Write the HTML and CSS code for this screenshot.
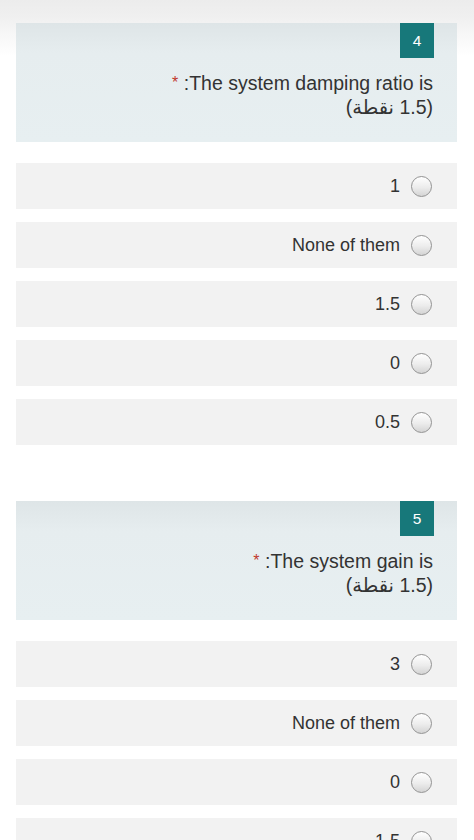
FILE: index.html
```html
<!DOCTYPE html>
<html lang="ar" dir="rtl">
<head>
<meta charset="utf-8">
<title>Quiz</title>
<link rel="stylesheet" href="styles.css">
</head>
<body>
<main class="page">
  <section class="question">
    <div class="q-head">
      <div class="badge">4</div>
      <div class="q-text">The system damping ratio is: <span class="req">*</span></div>
      <div class="q-points">(1.5 نقطة)</div>
    </div>
    <ul class="options">
      <li class="option"><span class="radio"></span><span class="label">1</span></li>
      <li class="option"><span class="radio"></span><span class="label">None of them</span></li>
      <li class="option"><span class="radio"></span><span class="label">1.5</span></li>
      <li class="option"><span class="radio"></span><span class="label">0</span></li>
      <li class="option"><span class="radio"></span><span class="label">0.5</span></li>
    </ul>
  </section>
  <section class="question">
    <div class="q-head">
      <div class="badge">5</div>
      <div class="q-text">The system gain is: <span class="req">*</span></div>
      <div class="q-points">(1.5 نقطة)</div>
    </div>
    <ul class="options">
      <li class="option"><span class="radio"></span><span class="label">3</span></li>
      <li class="option"><span class="radio"></span><span class="label">None of them</span></li>
      <li class="option"><span class="radio"></span><span class="label">0</span></li>
      <li class="option"><span class="radio"></span><span class="label">1.5</span></li>
    </ul>
  </section>
</main>
</body>
</html>
```

FILE: styles.css
```css
html, body {
  margin: 0;
  padding: 0;
}

body {
  font-family: "Liberation Sans", "DejaVu Sans", Arial, sans-serif;
  color: #333333;
  background: #ffffff linear-gradient(to bottom, #ececec 0, #f0f0f0 18px, #f7f7f7 34px, #ffffff 56px) no-repeat;
  background-size: 100% 60px;
  height: 840px;
  overflow: hidden;
}

.page {
  padding: 23px 17px 0 16px;
  display: flex;
  flex-direction: column;
  gap: 56px;
}

.question {
  display: flex;
  flex-direction: column;
  gap: 21px;
}

.q-head {
  background: linear-gradient(to bottom, #dee5e7 0, #e6edef 30px, #e7eff1 100%);
  padding: 0 23px 0 0;
  display: flex;
  flex-direction: column;
  align-items: flex-start;
  height: 119px;
  box-sizing: border-box;
}

.badge {
  width: 34px;
  height: 35px;
  background: #17787a;
  color: #ffffff;
  font-size: 15.5px;
  display: flex;
  align-items: center;
  justify-content: center;
  margin-bottom: 13px;
}

.q-text,
.q-points {
  font-size: 19.5px;
  line-height: 24px;
  padding-right: 1px;
  color: #333333;
}

.req {
  color: #c0392b;
  font-size: 16px;
  vertical-align: 2px;
}

.options {
  list-style: none;
  margin: 0;
  padding: 0;
  display: flex;
  flex-direction: column;
  gap: 13px;
}

.option {
  height: 46px;
  background: #f2f2f2;
  display: flex;
  align-items: center;
  gap: 11px;
  padding-right: 25px;
}

.label {
  font-size: 18px;
  color: #333333;
}

.radio {
  width: 21px;
  height: 21px;
  box-sizing: border-box;
  border: 1.5px solid #939393;
  border-radius: 50%;
  background: linear-gradient(to bottom, #ffffff 0%, #ececec 55%, #d4d4d4 100%);
  flex: none;
}
```
